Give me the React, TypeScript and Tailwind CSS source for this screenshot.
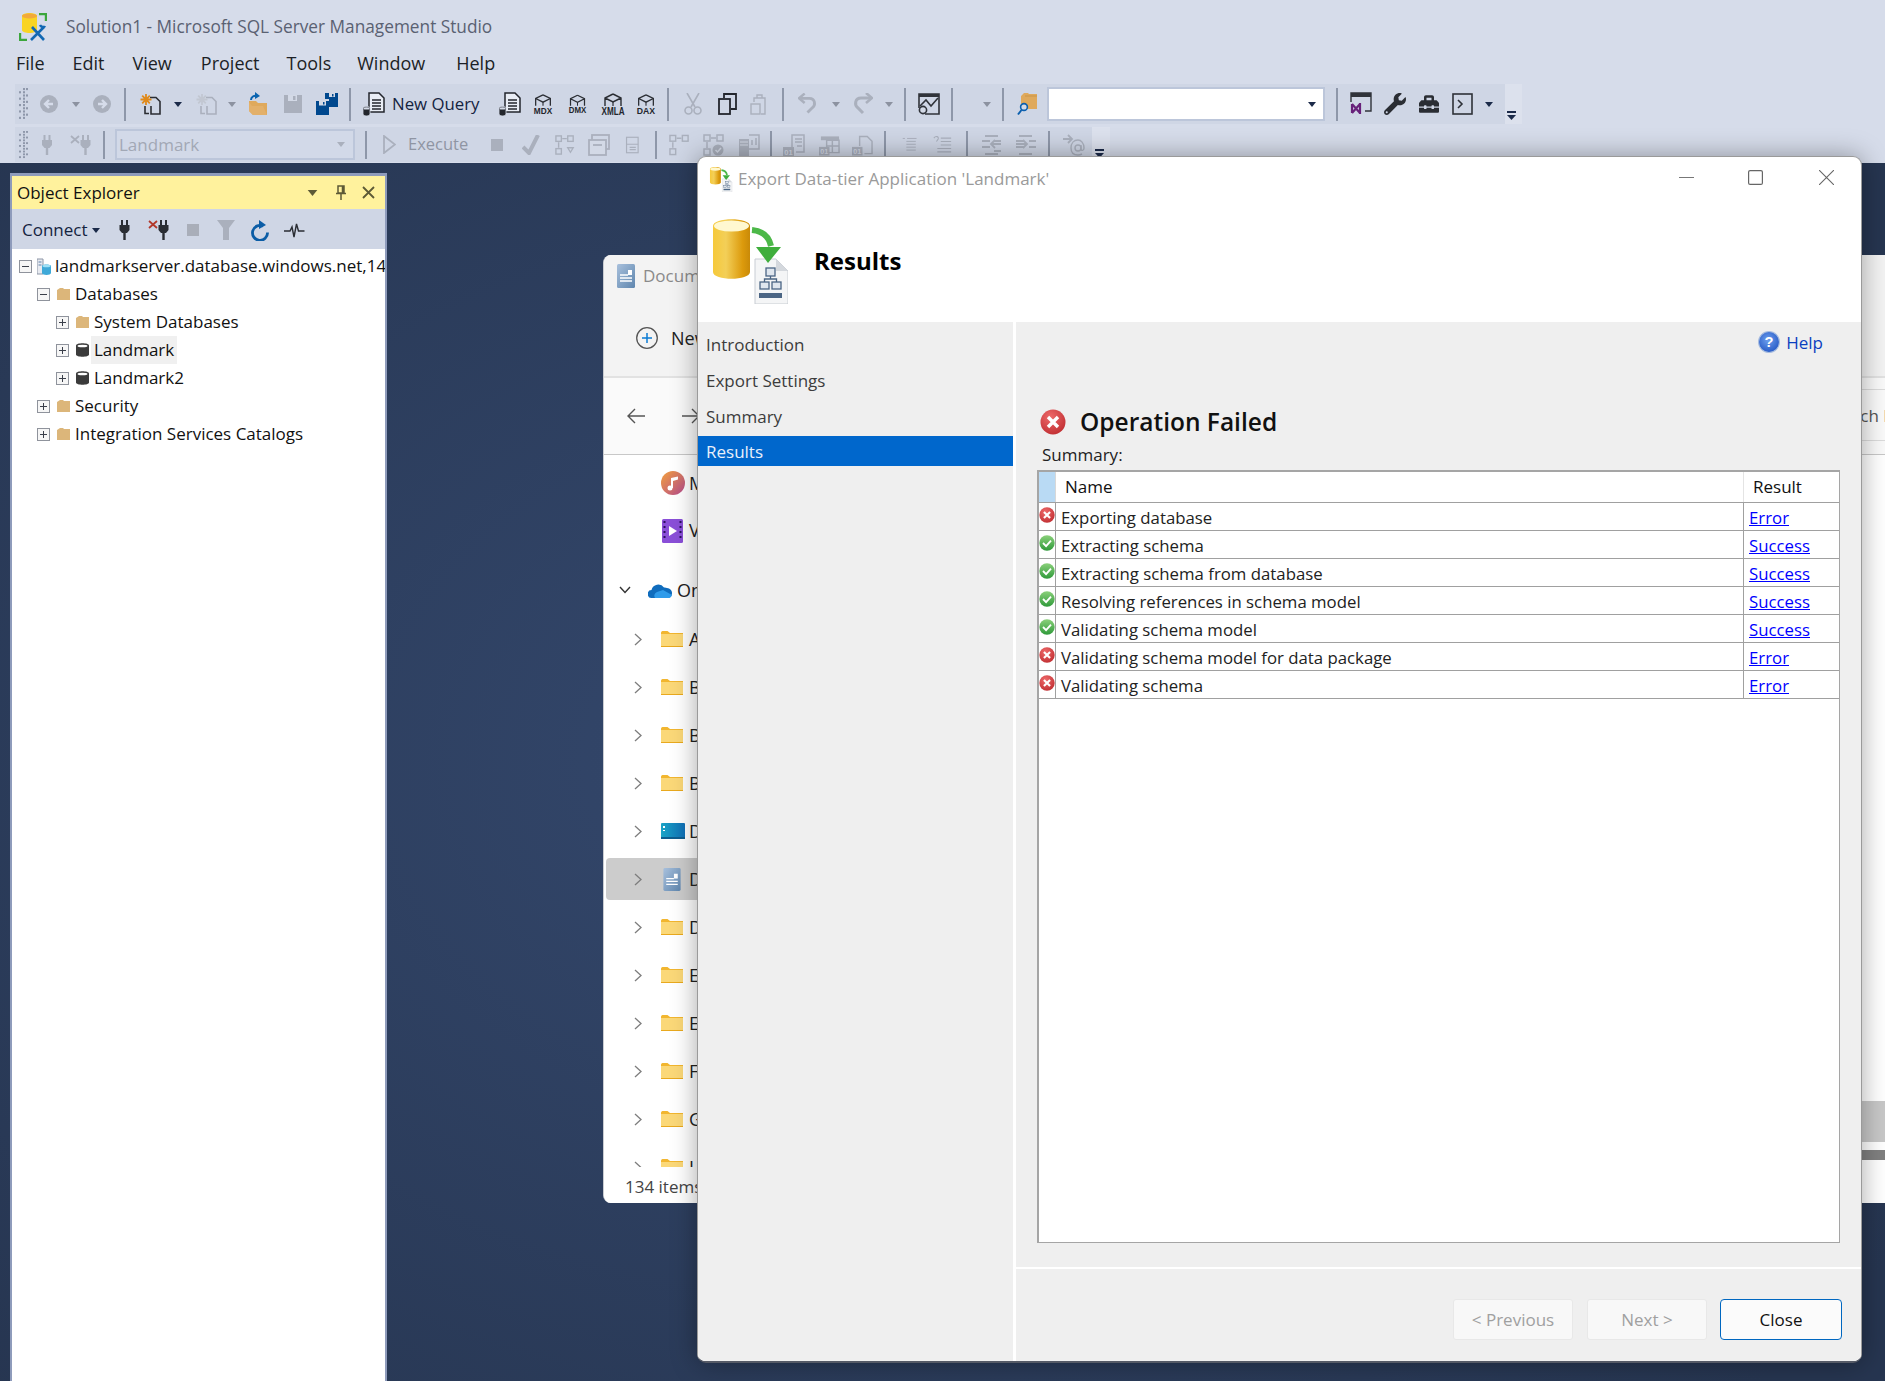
import React from "react";
import { FaWrench, FaToolbox } from "react-icons/fa";

type P = { className?: string };
const G = "#aab0bd";

function Grip({ className = "" }: P) {
  return (
    <svg className={`shrink-0 ${className}`} viewBox="0 0 10 30" preserveAspectRatio="none">
      {Array.from({ length: 10 }).map((_, i) => (
        <g key={i} fill="#8f98ab">
          <rect x={i % 2 ? 1 : 5} y={i * 3} width="2" height="2" />
          <rect x={i % 2 ? 5 : 8} y={i * 3} width="2" height="2" />
        </g>
      ))}
    </svg>
  );
}
function Sep({ className = "" }: P) {
  return <div className={`w-[2px] shrink-0 bg-[#8e97a9] ${className}`} />;
}
function Caret({ className = "", color = "#1b2a49" }: P & { color?: string }) {
  return (
    <svg className={`w-[8px] h-[5px] shrink-0 ${className}`} viewBox="0 0 8 5">
      <path d="M0 0h8L4 5z" fill={color} />
    </svg>
  );
}
function Overflow({ className = "" }: P) {
  return (
    <svg className={`w-[9px] h-[9px] shrink-0 ${className}`} viewBox="0 0 9 9">
      <rect x="0" y="0" width="9" height="2" fill="#1b2a49" />
      <path d="M0 4h9L4.500 9z" fill="#1b2a49" />
    </svg>
  );
}
function Circ({ className = "", dir }: P & { dir: "l" | "r" }) {
  return (
    <svg className={`shrink-0 w-[18px] h-[18px] ${className}`} viewBox="0 0 18 18">
      <circle cx="9" cy="9" r="9" fill={G} />
      {dir === "l" ? (
        <path d="M13 9H6M9 5L5 9l4 4" stroke="#d6dcea" strokeWidth="2.400" fill="none" />
      ) : (
        <path d="M5 9h7M9 5l4 4-4 4" stroke="#d6dcea" strokeWidth="2.400" fill="none" />
      )}
    </svg>
  );
}
function NewProj({ className = "", off }: P & { off?: boolean }) {
  const c = off ? G : "#2b2d33";
  return (
    <svg className={`shrink-0 h-[21px] ${className}`} viewBox="0 0 21 21">
      <path d="M10 3.500h6l4 4V20h-9V12M5 12v7.500h4" fill="none" stroke={c} strokeWidth="1.600" />
      <path d="M6 0v11M.5 5.500h11M2.200 1.700l7.600 7.600M9.800 1.700L2.200 9.300" stroke={off ? "#c2c7d2" : "#e08a1a"} strokeWidth="1.800" />
    </svg>
  );
}
function OpenFolder({ className = "" }: P) {
  return (
    <svg className={`shrink-0 h-[24px] ${className}`} viewBox="0 0 22 24">
      <path d="M1 9h7l2 2h9v12H5L1 19z" fill="#dfa95c" />
      <path d="M1 10v9l4 4h14l-4-9H4z" fill="#e3b06a" />
      <path d="M3 8c0-3 3-5 6-4" stroke="#0a64b0" strokeWidth="2" fill="none" />
      <path d="M7 0l5 4-5 3z" fill="#0a64b0" />
    </svg>
  );
}
function Floppy({ className = "", color = G }: P & { color?: string }) {
  return (
    <svg className={`shrink-0 ${className}`} viewBox="0 0 18 18">
      <path d="M0 0h18v18H0z" fill={color} />
      <rect x="4" y="0" width="9" height="6" fill="#d3d9e6" />
      <rect x="9" y="1" width="2.500" height="4" fill={color} />
    </svg>
  );
}
function SaveAll({ className = "" }: P) {
  return (
    <svg className={`shrink-0 h-[22px] ${className}`} viewBox="0 0 22 22">
      <path d="M9 0h13v14H13V6H9z" fill="#00488e" />
      <rect x="13" y="0" width="6" height="4" fill="#d3d9e6" />
      <rect x="16" y="1" width="1.500" height="2.500" fill="#00488e" />
      <path d="M0 8h13v14H0z" fill="#00488e" />
      <rect x="3" y="8" width="7" height="4.500" fill="#d3d9e6" />
      <rect x="7" y="9" width="1.500" height="2.500" fill="#00488e" />
    </svg>
  );
}
function Query({ className = "" }: P) {
  return (
    <svg className={`shrink-0 h-[24px] ${className}`} viewBox="0 0 22 24">
      <path d="M6 1h10l5 5v14H6z" fill="#e9edf5" stroke="#23262d" strokeWidth="1.500" />
      <path d="M9 8h9M9 11h9M9 14h9M9 17h9" stroke="#23262d" strokeWidth="1.300" />
      <path d="M0 16c0-2 7-2 7 0v6c0 2.600-7 2.600-7 0z" fill="#23262d" stroke="#d3d9e6" strokeWidth=".8" />
      <ellipse cx="3.500" cy="16.400" rx="3" ry="1.200" fill="#d3d9e6" />
    </svg>
  );
}
function Cube({ className = "", label }: P & { label: string }) {
  return (
    <svg className={`shrink-0 h-[22px] overflow-visible ${className}`} viewBox="0 0 24 22">
      <path d="M12 1l8 4v8M4 13V5l8-4M4 5l8 4 8-4" fill="none" stroke="#2a2d33" strokeWidth="1.400" />
      <path d="M12 9v4" stroke="#2a2d33" strokeWidth="1.200" />
      <text x="12" y="21.500" textAnchor="middle" fontFamily="'Liberation Sans',sans-serif" fontWeight="700" fontSize="10" fill="#23262d" textLength={label.length > 3 ? 23 : 20} lengthAdjust="spacingAndGlyphs">
        {label}
      </text>
    </svg>
  );
}
function Cut({ className = "" }: P) {
  return (
    <svg className={`shrink-0 h-[22px] ${className}`} viewBox="0 0 18 22" fill="none" stroke={G} strokeWidth="1.600">
      <path d="M3 0l8 14M15 0L7 14" />
      <circle cx="4.500" cy="17.500" r="3.500" />
      <circle cx="13.500" cy="17.500" r="3.500" />
    </svg>
  );
}
function Copy({ className = "" }: P) {
  return (
    <svg className={`shrink-0 h-[22px] ${className}`} viewBox="0 0 19 22" fill="none" stroke="#23262d" strokeWidth="1.800">
      <path d="M6 5V1h12v15h-5" />
      <rect x="1" y="6" width="11" height="15" />
    </svg>
  );
}
function Paste({ className = "" }: P) {
  return (
    <svg className={`shrink-0 h-[22px] ${className}`} viewBox="0 0 19 22" fill="none" stroke={G} strokeWidth="1.400">
      <path d="M4 9V5h11v16h-4" />
      <path d="M7 5V2h5v3" />
      <rect x="1" y="11" width="9" height="10" />
    </svg>
  );
}
function Undo({ className = "" }: P) {
  return (
    <svg className={`shrink-0 h-[22px] ${className}`} viewBox="0 0 20 22" fill="none" stroke={G} strokeWidth="3">
      <path d="M3 5h9c6 0 7 7 3 10l-5 5" />
      <path d="M7 0L1 5l6 5" strokeWidth="2.600" />
    </svg>
  );
}
function Redo({ className = "" }: P) {
  return (
    <svg className={`shrink-0 h-[22px] ${className}`} viewBox="0 0 20 22" fill="none" stroke={G} strokeWidth="3">
      <path d="M17 5H8C2 5 1 12 5 15l5 5" />
      <path d="M13 0l6 5-6 5" strokeWidth="2.600" />
    </svg>
  );
}
function Monitor({ className = "" }: P) {
  return (
    <svg className={`shrink-0 h-[22px] ${className}`} viewBox="0 0 22 22" fill="none" stroke="#30333a" strokeWidth="1.600">
      <path d="M7 21h14V1H1v14" />
      <path d="M1 1h20v3H1z" fill="#30333a" strokeWidth="0" />
      <path d="M2 13l6-6 5 6 7-8" />
      <circle cx="5" cy="17" r="3.600" fill="#d3d9e6" />
    </svg>
  );
}
function Find({ className = "" }: P) {
  return (
    <svg className={`shrink-0 h-[24px] ${className}`} viewBox="0 0 20 24">
      <path d="M4 4l3-3h4l1 1h8v15H4z" fill="#dfa95c" />
      <path d="M8 4h12" stroke="#c99549" strokeWidth="1" />
      <circle cx="7" cy="15" r="3.400" fill="#d3d9e6" stroke="#0b5fae" strokeWidth="1.600" />
      <path d="M4.500 18L1 22.500" stroke="#0b5fae" strokeWidth="2" />
    </svg>
  );
}
function VsWin({ className = "" }: P) {
  return (
    <svg className={`shrink-0 h-[24px] ${className}`} viewBox="0 0 22 24" fill="none">
      <path d="M1 10V1h20v18h-6" stroke="#30333a" strokeWidth="1.400" />
      <rect x="1" y="1" width="20" height="4" fill="#30333a" />
      <path d="M2 12l8 9M10 12l-8 9M2 12v9M10 11v11" stroke="#68217a" strokeWidth="2.200" />
    </svg>
  );
}
function Term({ className = "" }: P) {
  return (
    <svg className={`shrink-0 h-[22px] ${className}`} viewBox="0 0 21 22" fill="none" stroke="#2e3138" strokeWidth="1.600">
      <rect x="1" y="1" width="19" height="20" />
      <path d="M6 7l4 4-4 4" />
    </svg>
  );
}
function PlugIcon({ className = "", color = G }: P & { color?: string }) {
  return (
    <svg className={`shrink-0 h-[20px] ${className}`} viewBox="0 0 10 20" fill={color}>
      <rect x="1.500" y="0" width="2" height="5" />
      <rect x="6.500" y="0" width="2" height="5" />
      <path d="M0 5h10v5l-2.500 3h-5L0 10z" />
      <rect x="3.800" y="12" width="2.400" height="8" />
    </svg>
  );
}
function PlugX({ className = "", color = G, x = G }: P & { color?: string; x?: string }) {
  return (
    <svg className={`shrink-0 h-[20px] ${className}`} viewBox="0 0 22 20">
      <path d="M1 1l8 7M9 1L1 8" stroke={x} strokeWidth="1.800" />
      <g fill={color}>
        <rect x="12" y="0" width="2" height="5" />
        <rect x="17" y="0" width="2" height="5" />
        <path d="M10.500 5h10v5L18 13h-5l-2.500-3z" />
        <rect x="14.300" y="12" width="2.400" height="8" />
      </g>
    </svg>
  );
}
function Tool2({ className = "", kind }: P & { kind: number }) {
  const c = G;
  const s = { fill: "none", stroke: c, strokeWidth: 1.5 };
  return (
    <svg className={`shrink-0 h-[22px] ${className}`} viewBox="0 0 22 22">
      {kind === 0 && (
        <g {...s}>
          <rect x="1" y="1" width="6" height="6" /><rect x="14" y="1" width="6" height="6" />
          <rect x="1" y="15" width="6" height="6" />
          <path d="M8 4h5M4 8v6M14 14h6l-3 5z" />
        </g>
      )}
      {kind === 1 && (
        <g {...s} strokeWidth="1.800">
          <rect x="4" y="1" width="17" height="14" /><rect x="1" y="6" width="17" height="15" fill="#d3d9e6" /><path d="M5 11h9" />
        </g>
      )}
      {kind === 2 && (
        <g {...s}>
          <rect x="2" y="1" width="15" height="20" /><path d="M2 10h15M6 14h8M6 17h8" />
        </g>
      )}
      {kind === 3 && (
        <g {...s}>
          <rect x="1" y="1" width="6" height="6" /><rect x="14" y="1" width="6" height="6" /><rect x="1" y="15" width="6" height="6" />
          <path d="M8 4h5M4 8v6" />
        </g>
      )}
      {kind === 4 && (
        <g>
          <g {...s}>
            <rect x="1" y="1" width="6" height="6" /><rect x="14" y="1" width="6" height="6" /><rect x="1" y="15" width="6" height="6" />
            <path d="M8 4h5M4 8v6" />
          </g>
          <circle cx="15" cy="16" r="5.500" fill={c} />
          <path d="M12.500 16l2 2 3.500-4" stroke="#d3d9e6" strokeWidth="1.500" fill="none" />
        </g>
      )}
      {kind === 5 && (
        <g>
          <rect x="1" y="5" width="10" height="17" fill={c} />
          <path d="M2 8h8M2 11h8" stroke="#d3d9e6" />
          <path d="M11 1h10v14H11M14 11V6M18 11V4" {...s} />
        </g>
      )}
      {kind >= 6 && kind <= 8 && (
        <g>
          {kind === 6 && <path d="M9 13V1h9l3 0v17H13M12 5h7M12 8h7M14 12h5" {...s} />}
          {kind === 7 && <path d="M2 2h19v4H2z" fill={c} />}
          {kind === 7 && <path d="M8 6h13v13H8zM14 6v13M8 12h13" {...s} />}
          {kind === 8 && <path d="M8 12V2h8l5 5v13h-8" {...s} />}
          <rect x="0" y="13" width="11" height="9" fill={c} />
          <text x="5.500" y="20.500" textAnchor="middle" fontSize="7.500" fontFamily="'Liberation Sans',sans-serif" fontWeight="700" fill="#d3d9e6">01</text>
        </g>
      )}
      {kind === 9 && <path d="M1 2h3M7 2h13M6 6h13M6 10h13M6 14h13M6 18h13" {...s} strokeWidth="1.300" />}
      {kind === 10 && <path d="M1 3c2-3 6-2 5 1l-2 3M9 3h12M9 7h12M9 11h12M5 15h16M5 19h16" {...s} strokeWidth="1.300" />}
      {kind === 11 && <path d="M4 2h13M1 7h8M1 13h8M4 20h13M20 10H10M14 6l-4 4 4 4M13 17h7M13 7h7" {...s} strokeWidth="1.800" />}
      {kind === 12 && <path d="M4 2h13M1 7h8M1 13h8M4 20h13M1 10h11M8 6l4 4-4 4M14 7h7M14 13h7" {...s} strokeWidth="1.800" />}
    </svg>
  );
}
function AtArrow({ className = "" }: P) {
  return (
    <svg className={`shrink-0 h-[22px] ${className}`} viewBox="0 0 23 22" fill="none" stroke={G} strokeWidth="1.400">
      <path d="M1 5h9M6 1l4 4-4 4" strokeWidth="1.800" />
      <circle cx="16" cy="14" r="3" />
      <path d="M19 11v4c0 2 3 2 3-1 0-5-3-8-6-8-4 0-7 3-7 8s3 7 7 7c2 0 3-.5 4-1" />
    </svg>
  );
}

function Box({ plus }: { plus?: boolean }) {
  return (
    <svg className="shrink-0 w-[13px] h-[13px]" viewBox="0 0 13 13">
      <rect x=".5" y=".5" width="12" height="12" fill="#f6f6f6" stroke="#8f939c" />
      <path d={plus ? "M3 6.500h7M6.500 3v7" : "M3 6.500h7"} stroke="#3a3f4a" strokeWidth="1" />
    </svg>
  );
}
function TanFolder() {
  return (
    <svg className="shrink-0 w-[13px] h-[12px]" viewBox="0 0 13 12">
      <path d="M0 2l3-2h3l1 1h6v11H0z" fill="#dcb67a" />
    </svg>
  );
}
function Cyl() {
  return (
    <svg className="shrink-0 w-[13px] h-[14px]" viewBox="0 0 13 14">
      <path d="M0 2.500C0-.5 13-.5 13 2.500v9c0 3-13 3-13 0z" fill="#3b3b3b" />
      <ellipse cx="6.500" cy="3" rx="5" ry="1.300" fill="#ffffff" />
    </svg>
  );
}
function ServerIcon() {
  return (
    <svg className="shrink-0 w-[14px] h-[17px]" viewBox="0 0 14 17">
      <path d="M0 1h6v15H0z" fill="#e8ebf1" stroke="#8c95a6" />
      <path d="M1.500 4h3M1.500 7h3" stroke="#5e7fa8" />
      <path d="M5 8c0-2 9-2 9 0v7c0 2.500-9 2.500-9 0z" fill="#3fa9d8" />
      <ellipse cx="9.500" cy="8" rx="4" ry="1.300" fill="#9fe0f5" />
    </svg>
  );
}
function TreeRow({ box, icon, text, pad, hi, tight }: { box: "p" | "m"; icon: React.ReactNode; text: string; pad: string; hi?: boolean; tight?: boolean }) {
  return (
    <div className={`h-[28px] flex items-center ${pad}`}>
      <Box plus={box === "p"} />
      <div className={`${tight ? "ml-[5px]" : "ml-[6px]"} w-[14px] flex justify-center shrink-0`}>{icon}</div>
      <span className={`${tight ? "ml-[1px]" : "ml-[2px]"} px-[3px] h-[28px] flex items-center whitespace-nowrap text-[17px] text-[#111] ${hi ? "bg-[#f0f0f0]" : ""}`}>{text}</span>
    </div>
  );
}

function ExportIcon({ className = "" }: P) {
  return (
    <svg className={`shrink-0 ${className}`} viewBox="0 0 75 85">
      <defs>
        <linearGradient id="gold" x1="0" x2="1" y1="0" y2="0">
          <stop offset="0" stopColor="#f6c93a" />
          <stop offset=".35" stopColor="#f3cf58" />
          <stop offset=".8" stopColor="#dc9a0c" />
          <stop offset="1" stopColor="#c98a08" />
        </linearGradient>
      </defs>
      <path d="M0 7C0-2 37-2 37 7v46c0 9-37 9-37 0z" fill="url(#gold)" />
      <ellipse cx="18.500" cy="7" rx="17.500" ry="5.500" fill="#fff8d0" />
      <path d="M39 11c11 1 17 7 19 16" fill="none" stroke="#4cb848" strokeWidth="6" />
      <path d="M42 40h21l12 12v33H42z" fill="#f4f5f6" stroke="#c8cdd3" strokeWidth="1" />
      <path d="M63 40v12h12z" fill="#d4d8dd" />
      <path d="M43 28h25L55 44z" fill="#3fae3c" />
      <g fill="#dfe6ee" stroke="#4b6584" strokeWidth="1.300">
        <rect x="53" y="49" width="9" height="8" />
        <rect x="47" y="63" width="9" height="7" />
        <rect x="59" y="63" width="9" height="7" />
      </g>
      <path d="M57.500 57v3M51.500 63v-3h12v3" fill="none" stroke="#4b6584" strokeWidth="1.300" />
      <rect x="46" y="74" width="23" height="5" fill="#4b6584" />
    </svg>
  );
}
function ErrIcon({ className = "" }: P) {
  return (
    <svg className={`shrink-0 ${className}`} viewBox="0 0 26 26">
      <defs>
        <radialGradient id="er" cx=".4" cy=".3" r=".8">
          <stop offset="0" stopColor="#ee6a6a" />
          <stop offset="1" stopColor="#bd2a2e" />
        </radialGradient>
      </defs>
      <circle cx="13" cy="13" r="12.500" fill="url(#er)" />
      <path d="M8 8l10 10M18 8L8 18" stroke="#fff" strokeWidth="3.400" />
    </svg>
  );
}
function OkIcon({ className = "" }: P) {
  return (
    <svg className={`shrink-0 ${className}`} viewBox="0 0 26 26">
      <defs>
        <linearGradient id="ok" x1="0" x2="0" y1="0" y2="1">
          <stop offset="0" stopColor="#8ad07a" />
          <stop offset="1" stopColor="#2f9a3a" />
        </linearGradient>
      </defs>
      <circle cx="13" cy="13" r="12.500" fill="url(#ok)" />
      <path d="M6.500 13l5 5 8-9" stroke="#fff" strokeWidth="3" fill="none" />
    </svg>
  );
}
function HelpIcon() {
  return (
    <svg className="shrink-0 w-[22px] h-[22px]" viewBox="0 0 21 21">
      <defs>
        <radialGradient id="hl" cx=".45" cy=".4" r=".7">
          <stop offset="0" stopColor="#6ea0ee" />
          <stop offset="1" stopColor="#1c4fc0" />
        </radialGradient>
      </defs>
      <circle cx="10.500" cy="10.500" r="10" fill="url(#hl)" stroke="#a9bee0" />
      <text x="10.500" y="15.500" textAnchor="middle" fontSize="14" fontWeight="700" fontFamily="'Liberation Sans',sans-serif" fill="#fff">?</text>
    </svg>
  );
}

function Chev() {
  return (
    <svg className="shrink-0 w-[8px] h-[13px]" viewBox="0 0 8 13" fill="none" stroke="#7d7d7d" strokeWidth="1.300">
      <path d="M1 1l6 5.500L1 12" />
    </svg>
  );
}
function YFolder() {
  return (
    <svg className="shrink-0 w-[22px] h-[16px]" viewBox="0 0 22 16">
      <path d="M0 2c0-1 .5-2 1.500-2h5L9 2h13v14H0z" fill="#f2b62f" />
      <path d="M0 3h22v13H0z" fill="#fbd878" />
      <path d="M0 15h22v1H0z" fill="#e9a91e" />
    </svg>
  );
}
function DocTile({ className = "" }: P) {
  return (
    <svg className={`shrink-0 ${className}`} viewBox="0 0 18 24">
      <defs>
        <linearGradient id="tile" x1="0" x2="1" y1="0" y2="1">
          <stop offset="0" stopColor="#a8c0dc" />
          <stop offset="1" stopColor="#5f86ae" />
        </linearGradient>
      </defs>
      <rect width="18" height="24" rx="1.500" fill="url(#tile)" />
      <path d="M3 11h8M3 14h12M3 17h12" stroke="#fff" strokeWidth="1.300" />
      <rect x="11" y="6" width="4" height="5" fill="#fff" />
    </svg>
  );
}
const rows: { ic: React.ReactNode; l: string; sel?: boolean }[] = [
  { ic: <YFolder />, l: "A" },
  { ic: <YFolder />, l: "B" },
  { ic: <YFolder />, l: "B" },
  { ic: <YFolder />, l: "B" },
  {
    ic: (
      <svg className="shrink-0 w-[24px] h-[16px]" viewBox="0 0 24 16">
        <defs>
          <linearGradient id="dr" x1="0" x2="1" y1="0" y2="0">
            <stop offset="0" stopColor="#1ba4c6" />
            <stop offset="1" stopColor="#0f6fb6" />
          </linearGradient>
        </defs>
        <rect width="24" height="16" rx="1" fill="url(#dr)" />
        <rect y="14" width="24" height="2" fill="#0d5d8f" />
        <rect x="2" y="3" width="2" height="2" fill="#fff" />
        <rect x="2" y="7" width="2" height="1" fill="#fff" />
      </svg>
    ),
    l: "D",
  },
  { ic: <DocTile className="w-[18px] h-[23px] ml-[2px]" />, l: "D", sel: true },
  { ic: <YFolder />, l: "D" },
  { ic: <YFolder />, l: "E" },
  { ic: <YFolder />, l: "E" },
  { ic: <YFolder />, l: "F" },
  { ic: <YFolder />, l: "G" },
  { ic: <YFolder />, l: "I" },
];

const results = [
  { n: "Exporting database", ok: false },
  { n: "Extracting schema", ok: true },
  { n: "Extracting schema from database", ok: true },
  { n: "Resolving references in schema model", ok: true },
  { n: "Validating schema model", ok: true },
  { n: "Validating schema model for data package", ok: false },
  { n: "Validating schema", ok: false },
];

export default function App() {
  return (
    <div className="relative w-[1885px] h-[1381px] overflow-hidden flex flex-col font-['Open_Sans',sans-serif] bg-[radial-gradient(ellipse_at_45%_55%,#34486d_0%,#263550_85%)]">
      {/* Shell header */}
      <div className="h-[163px] shrink-0 bg-[#d6dcea]">
        <div className="h-[53px] flex items-center pl-[19px]">
          <svg className="w-[28px] h-[28px] shrink-0" viewBox="0 0 28 28">
            <path d="M3 3c0-4 15-4 15 0v14c0 4-15 4-15 0z" fill="#f9d423" />
            <ellipse cx="10.500" cy="3" rx="7.500" ry="2.600" fill="#f2a93b" />
            <path d="M20 1h7v7M1 20v7h7" fill="none" stroke="#3ba63c" strokeWidth="2.400" />
            <path d="M12 27l13-13M13 14l12 13" stroke="#1268b3" strokeWidth="2.600" />
            <path d="M21 12c1 2 4 3 5 1" stroke="#1268b3" strokeWidth="2.500" fill="none" />
          </svg>
          <span className="ml-[19px] text-[#5a6172] text-[17.250px] whitespace-nowrap">Solution1 - Microsoft SQL Server Management Studio</span>
        </div>
        <div className="h-[21px] flex items-center text-[18px] text-[#1c1f26]">
          <span className="ml-[16px]">File</span>
          <span className="ml-[28px]">Edit</span>
          <span className="ml-[28px]">View</span>
          <span className="ml-[29px]">Project</span>
          <span className="ml-[27px]">Tools</span>
          <span className="ml-[26px]">Window</span>
          <span className="ml-[31px]">Help</span>
        </div>
        {/* Toolbar 1 */}
        <div className="mt-[10px] ml-[15px] w-[1507px] h-[40px] flex bg-[#dce1ed]">
          <div className="w-[1490px] h-full bg-[#cfd6e5] flex items-center shrink-0">
            <Grip className="ml-[3px] w-[10px] h-[32px]" />
            <Circ dir="l" className="ml-[12px]" />
            <Caret color="#8c92a0" className="ml-[14px]" />
            <Circ dir="r" className="ml-[13px]" />
            <Sep className="ml-[13px] h-[33px]" />
            <NewProj className="ml-[14px] w-[21px]" />
            <Caret className="ml-[13px]" />
            <NewProj off className="ml-[14px] w-[21px]" />
            <Caret color="#8c92a0" className="ml-[11px]" />
            <OpenFolder className="ml-[12px] w-[22px]" />
            <Floppy className="ml-[14px] w-[18px] h-[18px]" />
            <SaveAll className="ml-[14px] w-[22px]" />
            <Sep className="ml-[11px] h-[33px]" />
            <Query className="ml-[12px] w-[22px]" />
            <span className="ml-[7px] w-[88px] text-[16.800px] text-[#14233f] whitespace-nowrap shrink-0">New Query</span>
            <Query className="ml-[19px] w-[22px]" />
            <Cube label="MDX" className="ml-[11px] w-[22px]" />
            <Cube label="DMX" className="ml-[13px] w-[21px]" />
            <Cube label="XMLA" className="ml-[13px] w-[24px]" />
            <Cube label="DAX" className="ml-[10px] w-[22px]" />
            <Sep className="ml-[10px] h-[33px]" />
            <Cut className="ml-[15px] w-[18px]" />
            <Copy className="ml-[16px] w-[19px]" />
            <Paste className="ml-[13px] w-[19px]" />
            <Sep className="ml-[13px] h-[33px]" />
            <Undo className="ml-[14px] w-[19px]" />
            <Caret color="#8c92a0" className="ml-[15px]" />
            <Redo className="ml-[13px] w-[20px]" />
            <Caret color="#8c92a0" className="ml-[12px]" />
            <Sep className="ml-[11px] h-[33px]" />
            <Monitor className="ml-[12px] w-[22px]" />
            <Sep className="ml-[11px] h-[33px]" />
            <Caret color="#8c92a0" className="ml-[30px]" />
            <Sep className="ml-[11px] h-[33px]" />
            <Find className="ml-[13px] w-[20px]" />
            <div className="ml-[10px] w-[278px] h-[34px] shrink-0 bg-white border-2 border-[#bcc6da] flex items-center justify-end pr-[7px]">
              <Caret />
            </div>
            <Sep className="ml-[11px] h-[33px]" />
            <VsWin className="ml-[12px] w-[22px]" />
            <FaWrench className="ml-[12px] w-[22px] h-[22px] shrink-0 text-[#2a2d33]" />
            <FaToolbox className="ml-[13px] w-[20px] h-[20px] shrink-0 text-[#2a2d33]" />
            <Term className="ml-[13px] w-[21px]" />
            <Caret className="ml-[12px]" />
          </div>
          <Overflow className="ml-[2px] mt-[27px]" />
        </div>
        {/* Toolbar 2 */}
        <div className="mt-[3px] ml-[15px] w-[1095px] h-[35px] flex bg-[#dce1ed]">
          <div className="w-[1077px] h-full bg-[#cfd6e5] flex items-center shrink-0 text-[#9aa0ad]">
            <Grip className="ml-[3px] w-[10px] h-[28px]" />
            <PlugIcon className="ml-[14px] w-[10px]" />
            <PlugX className="ml-[18px] w-[22px]" />
            <Sep className="ml-[11px] h-[28px]" />
            <div className="ml-[10px] w-[240px] h-[31px] shrink-0 bg-[#d2d9e8] border-2 border-[#bcc6da] flex items-center justify-between pl-[2px] pr-[8px]">
              <span className="text-[17px] text-[#a2a8b5]">Landmark</span>
              <Caret color="#aab0bd" />
            </div>
            <Sep className="ml-[10px] h-[28px]" />
            <svg className="ml-[16px] w-[13px] h-[19px] shrink-0" viewBox="0 0 13 19" fill="none" stroke={G} strokeWidth="1.800"><path d="M1 1v17l11-8.500z" /></svg>
            <span className="ml-[12px] w-[59px] shrink-0 text-[16.500px] text-[#8f95a3] whitespace-nowrap">Execute</span>
            <div className="ml-[24px] w-[12px] h-[12px] shrink-0 bg-[#aab0bd]" />
            <svg className="ml-[19px] w-[18px] h-[20px] shrink-0" viewBox="0 0 18 20" fill="none" stroke={G} strokeWidth="4"><path d="M1 12l6 6L16 0" /></svg>
            <Tool2 kind={0} className="ml-[15px] w-[20px]" />
            <Tool2 kind={1} className="ml-[13px] w-[22px]" />
            <Tool2 kind={2} className="ml-[15px] w-[17px]" />
            <Sep className="ml-[13px] h-[28px]" />
            <Tool2 kind={3} className="ml-[12px] w-[21px]" />
            <Tool2 kind={4} className="ml-[13px] w-[22px]" />
            <Tool2 kind={5} className="ml-[13px] w-[22px]" />
            <Sep className="ml-[10px] h-[28px]" />
            <Tool2 kind={6} className="ml-[11px] w-[22px]" />
            <Tool2 kind={7} className="ml-[14px] w-[21px]" />
            <Tool2 kind={8} className="ml-[12px] w-[21px]" />
            <Sep className="ml-[11px] h-[28px]" />
            <Tool2 kind={9} className="ml-[16px] w-[16px]" />
            <Tool2 kind={10} className="ml-[15px] w-[19px]" />
            <Sep className="ml-[14px] h-[28px]" />
            <Tool2 kind={11} className="ml-[13px] w-[22px]" />
            <Tool2 kind={12} className="ml-[12px] w-[22px]" />
            <Sep className="ml-[11px] h-[28px]" />
            <AtArrow className="ml-[12px] w-[23px]" />
          </div>
          <Overflow className="ml-[3px] mt-[22px]" />
        </div>
      </div>

      {/* Object Explorer */}
      <div className="flex-1 pt-[10px] pl-[10px] min-h-0">
        <div className="w-[377px] h-full flex flex-col border-x-2 border-t-[3px] border-[#8e9bbb] bg-white">
          <div className="h-[33px] shrink-0 bg-[#fff29d] flex items-center pl-[5px] text-[17px] text-[#111]">
            <span>Object Explorer</span>
            <Caret color="#5d5a36" className="ml-auto w-[11px] h-[6px]" />
            <svg className="ml-[18px] w-[10px] h-[15px] shrink-0" viewBox="0 0 10 15" fill="none" stroke="#5d5a36" strokeWidth="1.500"><path d="M2 1h6v7H2zM0 8.500h10M5 9v6M6.500 1v7" /></svg>
            <svg className="ml-[16px] mr-[10px] w-[13px] h-[13px] shrink-0" viewBox="0 0 13 13" stroke="#5d5a36" strokeWidth="1.800"><path d="M1 1l11 11M12 1L1 12" /></svg>
          </div>
          <div className="h-[40px] pt-[2px] shrink-0 bg-[#cfd6e5] flex items-center">
            <span className="ml-[10px] text-[17px] text-[#14233f]">Connect</span>
            <Caret className="ml-[4px]" />
            <PlugIcon color="#2a2d33" className="ml-[19px] w-[11px]" />
            <PlugX color="#2a2d33" x="#b2382a" className="ml-[18px] w-[22px]" />
            <div className="ml-[17px] w-[12px] h-[12px] shrink-0 bg-[#a9aeb9]" />
            <svg className="ml-[18px] w-[18px] h-[20px] shrink-0" viewBox="0 0 18 20" fill={G}><path d="M0 0h18l-6 8v12H6V8z" /></svg>
            <svg className="ml-[16px] w-[18px] h-[21px] shrink-0" viewBox="0 0 18 21" fill="none" stroke="#0b5da6" strokeWidth="2.800"><path d="M12 6a7.500 7.500 0 1 0 4.500 6.500" /><path d="M8 0l7 5-7 4z" fill="#0b5da6" stroke="none" /></svg>
            <svg className="ml-[15px] w-[21px] h-[15px] shrink-0" viewBox="0 0 21 15" fill="none" stroke="#2a2d33" strokeWidth="1.400"><path d="M0 8h6l2-4 2 10 2.500-13 2 7h6" /></svg>
          </div>
          <div className="flex-1 pt-[3px] overflow-hidden">
            <TreeRow box="m" icon={<ServerIcon />} text="landmarkserver.database.windows.net,1433" pad="pl-[7px]" tight />
            <TreeRow box="m" icon={<TanFolder />} text="Databases" pad="pl-[25px]" />
            <TreeRow box="p" icon={<TanFolder />} text="System Databases" pad="pl-[44px]" />
            <TreeRow box="p" icon={<Cyl />} text="Landmark" pad="pl-[44px]" hi />
            <TreeRow box="p" icon={<Cyl />} text="Landmark2" pad="pl-[44px]" />
            <TreeRow box="p" icon={<TanFolder />} text="Security" pad="pl-[25px]" />
            <TreeRow box="p" icon={<TanFolder />} text="Integration Services Catalogs" pad="pl-[25px]" />
          </div>
        </div>
      </div>

      {/* File Explorer window behind */}
      <div className="absolute left-[603px] top-[255px] w-[1300px] h-[948px] rounded-lg overflow-hidden flex flex-col bg-white border-l border-[#c9ccd1]">
        <div className="h-[67px] shrink-0 bg-[#f3f3f3] flex items-center pl-[13px]">
          <DocTile className="w-[18px] h-[24px] -mt-[25px]" />
          <span className="ml-[8px] -mt-[25px] text-[17px] text-[#8a8a8a]">Documents</span>
        </div>
        <div className="h-[56px] shrink-0 bg-[#f3f3f3] border-b-2 border-[#e2e2e2] flex items-center pl-[32px]">
          <svg className="w-[22px] h-[22px] shrink-0 -mt-[22px]" viewBox="0 0 22 22" fill="none">
            <circle cx="11" cy="11" r="10.300" stroke="#555" strokeWidth="1.300" />
            <path d="M11 6v10M6 11h10" stroke="#0a7bd4" strokeWidth="1.500" />
          </svg>
          <span className="ml-[13px] -mt-[22px] text-[18px] text-[#222]">New</span>
        </div>
        <div className="h-[77px] shrink-0 border-b border-[#c8c8c8] relative flex items-center pl-[23px] bg-[#fafafa]">
          <svg className="w-[18px] h-[16px] shrink-0" viewBox="0 0 18 16" fill="none" stroke="#555" strokeWidth="1.400"><path d="M18 8H1M8 1L1 8l7 7" /></svg>
          <svg className="ml-[37px] w-[18px] h-[16px] shrink-0" viewBox="0 0 18 16" fill="none" stroke="#555" strokeWidth="1.400"><path d="M0 8h17M10 1l7 7-7 7" /></svg>
          <div className="absolute right-0 top-[11px] w-[120px] h-[52px] border-y border-[#dcdcdc] flex items-center pt-[2px]">
            <span className="ml-[42px] text-[17px] text-[#555] whitespace-nowrap">Search Documents</span>
          </div>
        </div>
        <div className="flex-1 min-h-0 relative flex flex-col">
          <div className="flex-1 min-h-0 overflow-hidden pt-[4px]">
            <div className="h-[48px] flex items-center pl-[57px]">
              <svg className="w-[24px] h-[24px] shrink-0" viewBox="0 0 24 24">
                <defs>
                  <linearGradient id="mus" x1="0" x2="1" y1="0" y2="1">
                    <stop offset="0" stopColor="#f2a03c" />
                    <stop offset="1" stopColor="#b54a8e" />
                  </linearGradient>
                </defs>
                <circle cx="12" cy="12" r="12" fill="url(#mus)" />
                <path d="M10 17V7l7-1.500v3L12 10v7" fill="#fff" />
                <circle cx="9" cy="17" r="2.500" fill="#fff" />
              </svg>
              <span className="ml-[4px] text-[18px] text-[#222]">M</span>
            </div>
            <div className="h-[47px] flex items-center pl-[58px]">
              <svg className="w-[21px] h-[24px] shrink-0" viewBox="0 0 21 24">
                <rect width="21" height="24" rx="1.500" fill="#8a4fd8" />
                <path d="M7 7v10l8-5z" fill="#fff" />
                <path d="M1.500 3h2M1.500 8h2M1.500 13h2M1.500 18h2M17.500 3h2M17.500 8h2M17.500 13h2M17.500 18h2" stroke="#2a1060" strokeWidth="2" />
              </svg>
              <span className="ml-[6px] text-[18px] text-[#222]">V</span>
            </div>
            <div className="mt-[12px] h-[48px] flex items-center pl-[15px]">
              <svg className="w-[12px] h-[8px] shrink-0" viewBox="0 0 12 8" fill="none" stroke="#333" strokeWidth="1.400"><path d="M1 1l5 5.500L11 1" /></svg>
              <svg className="ml-[17px] w-[24px] h-[15px] shrink-0" viewBox="0 0 24 15">
                <path d="M4 15a4 4 0 0 1-.500-8A7 7 0 0 1 16 4.500a5 5 0 0 1 3 .5 5 5 0 0 1 5 5.500A4.500 4.500 0 0 1 19.500 15z" fill="#0f6cbd" />
                <path d="M7 15a4 4 0 0 1 2-6l6-2 9 5a4 4 0 0 1-4.500 3z" fill="#2f9bea" />
              </svg>
              <span className="ml-[5px] text-[18px] text-[#222]">OneDrive</span>
            </div>
            <div>
              {rows.map((r, i) => (
                <div key={i} className={`h-[48px] flex items-center relative pl-[30px] ${i === 0 ? "mt-[1px]" : ""}`}>
                  {r.sel && <div className="absolute left-[2px] top-[3px] w-[200px] h-[42px] rounded bg-[#cccccc]" />}
                  <div className="relative flex items-center">
                    <Chev />
                    <div className="ml-[19px] w-[24px] flex shrink-0">{r.ic}</div>
                    <span className="ml-[4px] text-[18px] text-[#222]">{r.l}</span>
                  </div>
                </div>
              ))}
            </div>
          </div>
          <div className="h-[36px] shrink-0 bg-white flex items-center pl-[21px] pt-[4px] text-[17px] text-[#444]">134 items</div>
          <div className="absolute right-0 top-[646px] w-[60px] h-[41px] bg-[#c8c8c8]" />
          <div className="absolute right-0 top-[695px] w-[60px] h-[10px] bg-[#808080]" />
        </div>
      </div>

      {/* Export dialog */}
      <div className="absolute left-[697px] top-[156px] w-[1165px] h-[1207px] rounded-[9px] overflow-hidden flex flex-col border border-[#9a9a9a] border-b-2 border-b-[#555a66] bg-white shadow-[0_0_26px_rgba(0,0,0,0.35)]">
        <div className="h-[44px] shrink-0 flex items-center pl-[11px]">
          <ExportIcon className="w-[24px] h-[25px]" />
          <span className="ml-[5px] text-[17px] text-[#9a9a9a] whitespace-nowrap">Export Data-tier Application 'Landmark'</span>
          <svg className="ml-auto -mt-[3px] w-[15px] h-[1px] shrink-0" viewBox="0 0 15 1"><rect width="15" height="1" fill="#777" /></svg>
          <svg className="ml-[54px] -mt-[3px] w-[15px] h-[15px] shrink-0" viewBox="0 0 15 15" fill="none" stroke="#666" strokeWidth="1.200"><rect x=".6" y=".6" width="13.800" height="13.800" rx="1.500" /></svg>
          <svg className="ml-[56px] -mt-[3px] mr-[27px] w-[15px] h-[15px] shrink-0" viewBox="0 0 15 15" fill="none" stroke="#666" strokeWidth="1.100"><path d="M0 0l15 15M15 0L0 15" /></svg>
        </div>
        <div className="h-[121px] shrink-0 flex items-center pl-[15px]">
          <ExportIcon className="w-[75px] h-[85px]" />
          <span className="ml-[26px] -mt-[2px] text-[24px] font-bold text-black">Results</span>
        </div>
        <div className="flex-1 min-h-0 flex bg-white">
          <div className="w-[315px] shrink-0 bg-[#efefef] pt-[5px] flex flex-col text-[17px] text-[#3c3c3c]">
            <div className="h-[36px] flex items-center pl-[8px]">Introduction</div>
            <div className="h-[36px] flex items-center pl-[8px]">Export Settings</div>
            <div className="h-[36px] flex items-center pl-[8px]">Summary</div>
            <div className="h-[30px] mt-[1px] pt-[2px] flex items-center pl-[8px] bg-[#0067cc] text-[#e8f0fa]">Results</div>
          </div>
          <div className="ml-[3px] flex-1 min-w-0 bg-[#efefef] flex flex-col">
            <div className="h-[24px] mt-[8px] shrink-0 flex items-center justify-end pr-[38px]">
              <HelpIcon />
              <span className="ml-[6px] pt-[2px] text-[17px] text-[#0b3fc0]">Help</span>
            </div>
            <div className="h-[30px] mt-[53px] shrink-0 flex items-center pl-[24px]">
              <ErrIcon className="w-[26px] h-[26px]" />
              <span className="ml-[14px] text-[24.500px] font-semibold text-[#111] whitespace-nowrap">Operation Failed</span>
            </div>
            <div className="h-[20px] mt-[8px] shrink-0 flex items-center pl-[26px] text-[17px] text-[#222]">Summary:</div>
            <div className="mt-[5px] ml-[21px] w-[803px] h-[773px] shrink-0 bg-white border-[2px] border-[#a5a5a5] border-b border-r flex flex-col">
              <div className="h-[31px] shrink-0 flex border-b border-[#a0a0a0] text-[17px] text-[#111]">
                <div className="w-[16px] bg-[#b9daf4] shrink-0" />
                <div className="flex-1 flex items-center pl-[9px] border-l border-[#d8d8d8]">Name</div>
                <div className="w-[96px] flex items-center pl-[9px] border-l border-[#e4e4e4]">Result</div>
              </div>
              {results.map((r) => (
                <div key={r.n} className="h-[28px] shrink-0 flex border-b border-[#a0a0a0] text-[16.800px] text-[#222]">
                  <div className="w-[16px] shrink-0 pt-[4px]">
                    {r.ok ? <OkIcon className="w-[16px] h-[16px]" /> : <ErrIcon className="w-[16px] h-[16px]" />}
                  </div>
                  <div className="flex-1 flex items-center pl-[5px] pt-[3px] border-l border-[#a0a0a0]">{r.n}</div>
                  <div className="w-[96px] flex items-center pl-[5px] pt-[2px] border-l border-[#a0a0a0]">
                    <a className="text-[#0000ff] underline">{r.ok ? "Success" : "Error"}</a>
                  </div>
                </div>
              ))}
            </div>
            <div className="mt-[24px] flex-1 border-t-2 border-white flex items-start justify-end pt-[30px] pr-[19px] text-[17px]">
              <button className="w-[120px] h-[41px] pt-[1px] rounded-[3px] bg-[#f8f8f8] border border-[#e8e8e8] text-[#a0a0a0]">&lt; Previous</button>
              <button className="ml-[14px] w-[120px] h-[41px] pt-[1px] rounded-[3px] bg-[#f8f8f8] border border-[#e8e8e8] text-[#a0a0a0]">Next &gt;</button>
              <button className="ml-[13px] w-[122px] h-[41px] pt-[1px] rounded-[4px] bg-[#fbfbfb] border border-[#0067c0] text-[#111]">Close</button>
            </div>
          </div>
        </div>
      </div>
    </div>
  );
}
